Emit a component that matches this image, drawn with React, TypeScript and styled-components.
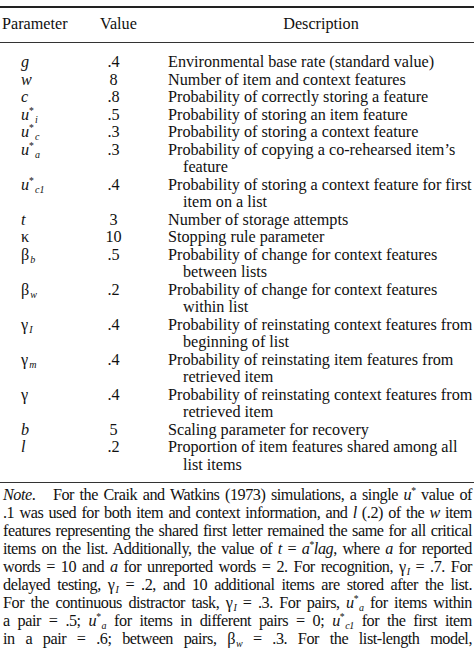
import * as React from "react";
import styled, { createGlobalStyle } from "styled-components";

const GlobalStyle = createGlobalStyle`
  html, body {
    margin: 0;
    padding: 0;
    background: #fff;
  }
  body {
    font-family: "Liberation Serif", "Times New Roman", serif;
    font-size: 16.2px;
    color: #111;
    overflow: hidden;
  }
`;

const Page = styled.div`
  padding-top: 6px;
`;

const Table = styled.div`
  border-top: 2px solid #222;
  border-bottom: 1px solid #333;
  line-height: 17.5px;
`;

const columns = `
  display: grid;
  grid-template-columns: 88px 48px 1fr;
`;

const HeaderRow = styled.div`
  ${columns}
  padding: 8.25px 0 7.75px;
  border-bottom: 1px solid #333;
`;

const HeadParam = styled.div`
  padding-left: 2px;
  white-space: nowrap;
`;

const HeadValue = styled.div`
  padding-left: 12px;
  white-space: nowrap;
`;

const HeadDesc = styled.div`
  padding-left: 32px;
  text-align: center;
`;

const Body = styled.div`
  padding: 11.75px 0 8px;
`;

const BodyRow = styled.div`
  ${columns}
`;

const ParamCell = styled.div`
  padding-left: 21px;
  white-space: nowrap;
`;

const ValueCell = styled.div`
  text-align: center;
  padding-left: 3px;
`;

const DescCell = styled.div`
  padding-left: 32px;
`;

const DescLine = styled.div<{ $cont?: boolean }>`
  white-space: nowrap;
  padding-left: ${(p) => (p.$cont ? "15px" : "0")};
`;

const Note = styled.div`
  margin-top: 3px;
  padding: 0 2px 0 3px;
  line-height: 18px;
  letter-spacing: -0.45px;
  word-spacing: -0.5px;
`;

const NoteLine = styled.div`
  text-align: justify;
  text-align-last: justify;
  white-space: nowrap;
`;

const Star = styled.sup`
  font-size: 0.6em;
  line-height: 0;
  vertical-align: 0.6em;
`;

const Sub = styled.sub`
  font-size: 0.62em;
  font-style: italic;
  line-height: 0;
  vertical-align: -0.3em;
  margin-left: 1px;
`;

const Gap = styled.span`
  display: inline-block;
  width: 12px;
`;

const U = ({ sub }: { sub?: string }) => (
  <>
    <i>u</i>
    <Star>*</Star>
    {sub && <Sub>{sub}</Sub>}
  </>
);

const Greek = ({ ch, sub }: { ch: string; sub?: string }) => (
  <>
    {ch}
    {sub && <Sub>{sub}</Sub>}
  </>
);

type Row = { param: React.ReactNode; value: string; desc: string[] };

const rows: Row[] = [
  { param: <i>g</i>, value: ".4", desc: ["Environmental base rate (standard value)"] },
  { param: <i>w</i>, value: "8", desc: ["Number of item and context features"] },
  { param: <i>c</i>, value: ".8", desc: ["Probability of correctly storing a feature"] },
  { param: <U sub="i" />, value: ".5", desc: ["Probability of storing an item feature"] },
  { param: <U sub="c" />, value: ".3", desc: ["Probability of storing a context feature"] },
  {
    param: <U sub="a" />,
    value: ".3",
    desc: ["Probability of copying a co-rehearsed item\u2019s", "feature"],
  },
  {
    param: <U sub="c1" />,
    value: ".4",
    desc: ["Probability of storing a context feature for first", "item on a list"],
  },
  { param: <i>t</i>, value: "3", desc: ["Number of storage attempts"] },
  { param: "\u03ba", value: "10", desc: ["Stopping rule parameter"] },
  {
    param: <Greek ch={"\u03b2"} sub="b" />,
    value: ".5",
    desc: ["Probability of change for context features", "between lists"],
  },
  {
    param: <Greek ch={"\u03b2"} sub="w" />,
    value: ".2",
    desc: ["Probability of change for context features", "within list"],
  },
  {
    param: <Greek ch={"\u03b3"} sub="I" />,
    value: ".4",
    desc: ["Probability of reinstating context features from", "beginning of list"],
  },
  {
    param: <Greek ch={"\u03b3"} sub="m" />,
    value: ".4",
    desc: ["Probability of reinstating item features from", "retrieved item"],
  },
  {
    param: "\u03b3",
    value: ".4",
    desc: ["Probability of reinstating context features from", "retrieved item"],
  },
  { param: <i>b</i>, value: "5", desc: ["Scaling parameter for recovery"] },
  {
    param: <i>l</i>,
    value: ".2",
    desc: ["Proportion of item features shared among all", "list items"],
  },
];

const gI = <Greek ch={"\u03b3"} sub="I" />;

const noteLines: React.ReactNode[] = [
  <>
    <i>Note</i>.<Gap /> For the Craik and Watkins (1973) simulations, a single <U /> value of
  </>,
  <>
    .1 was used for both item and context information, and <i>l</i> (.2) of the <i>w</i> item
  </>,
  <>features representing the shared first letter remained the same for all critical</>,
  <>
    items on the list. Additionally, the value of <i>t</i> = <i>a</i>
    <Star>*</Star>
    <i>lag</i>, where <i>a</i> for reported
  </>,
  <>
    words = 10 and <i>a</i> for unreported words = 2. For recognition, {gI} = .7. For
  </>,
  <>delayed testing, {gI} = .2, and 10 additional items are stored after the list.</>,
  <>
    For the continuous distractor task, {gI} = .3. For pairs, <U sub="a" /> for items within
  </>,
  <>
    a pair = .5; <U sub="a" /> for items in different pairs = 0; <U sub="c1" /> for the first item
  </>,
  <>
    in a pair = .6; between pairs, <Greek ch={"\u03b2"} sub="w" /> = .3. For the list-length model,
  </>,
];

export default function App() {
  return (
    <Page>
      <GlobalStyle />
      <Table>
        <HeaderRow>
          <HeadParam>Parameter</HeadParam>
          <HeadValue>Value</HeadValue>
          <HeadDesc>Description</HeadDesc>
        </HeaderRow>
        <Body>
          {rows.map((r, i) => (
            <BodyRow key={i}>
              <ParamCell>{r.param}</ParamCell>
              <ValueCell>{r.value}</ValueCell>
              <DescCell>
                {r.desc.map((line, j) => (
                  <DescLine key={j} $cont={j > 0}>
                    {line}
                  </DescLine>
                ))}
              </DescCell>
            </BodyRow>
          ))}
        </Body>
      </Table>
      <Note>
        {noteLines.map((line, i) => (
          <NoteLine key={i}>{line}</NoteLine>
        ))}
      </Note>
    </Page>
  );
}
